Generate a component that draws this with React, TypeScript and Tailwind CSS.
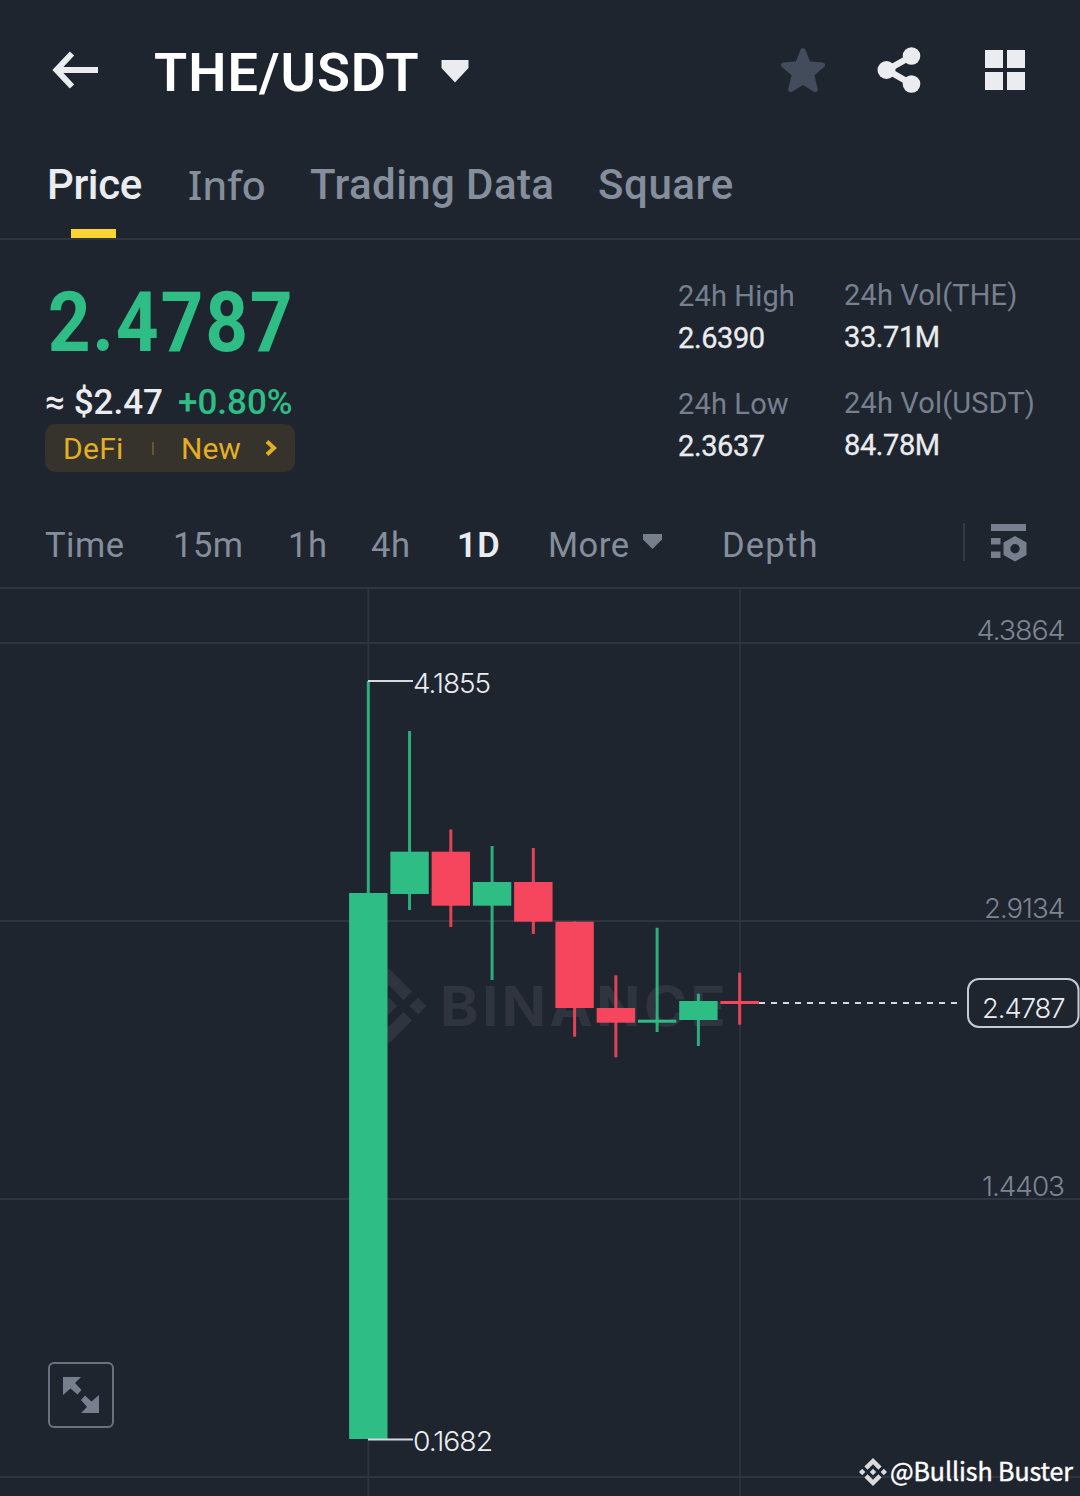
import clsx from 'clsx'

interface Candle {
  high: number
  low: number
  top: number
  bottom: number
  up: boolean
}

// Pixel values inside the chart's own coordinate space (0 = top border)
const CANDLES: Candle[] = [
  { high: 94, low: 852, top: 306, bottom: 852, up: true },
  { high: 144, low: 323, top: 264.7, bottom: 307, up: true },
  { high: 242.5, low: 340, top: 264.7, bottom: 318.7, up: false },
  { high: 259, low: 393, top: 295, bottom: 318.7, up: true },
  { high: 261, low: 347, top: 295, bottom: 334.7, up: false },
  { high: 334.4, low: 449.7, top: 334.7, bottom: 421, up: false },
  { high: 388.3, low: 470.3, top: 421, bottom: 435.7, up: false },
  { high: 340.7, low: 445, top: 432.7, bottom: 435.7, up: true },
  { high: 406.7, low: 459, top: 414, bottom: 433, up: true },
  { high: 385.7, low: 437.7, top: 414, bottom: 417, up: false },
]

const GRID_LINES = [
  { y: 56, label: '4.3864', x: 976.5, width: 88 },
  { y: 334, label: '2.9134', x: 984, width: 80 },
  { y: 612, label: '1.4403', x: 982, width: 82 },
  { y: 890, label: '', x: 0, width: 0 },
]

const TABS = [
  { label: 'Price', className: "w-[141px] font-['Roboto'] font-medium text-[#eaecef] tracking-[-0.400px]" },
  { label: 'Info', className: "w-[122px] font-['Noto_Sans'] text-[40px] font-medium" },
  { label: 'Trading Data', className: "w-[288px] font-['Roboto'] font-medium tracking-[0.400px]" },
  { label: 'Square', className: "w-[150px] font-['Roboto'] font-medium tracking-[0.600px]" },
]

const INTERVALS = [
  { label: 'Time', className: 'w-[128px]' },
  { label: '15m', className: 'w-[115px]' },
  { label: '1h', className: 'w-[83px]' },
  { label: '4h', className: 'w-[86px]' },
  { label: '1D', className: 'w-[90px] font-semibold text-[#eaecef]' },
]

const STATS = [
  [
    { label: '24h High', value: '2.6390' },
    { label: '24h Low', value: '2.3637' },
  ],
  [
    { label: '24h Vol(THE)', value: '33.71M' },
    { label: '24h Vol(USDT)', value: '84.78M' },
  ],
]

function BinanceMark({ className }: { className?: string }) {
  return (
    <svg viewBox="0 0 126.6 126.6" className={className} fill="currentColor">
      <BinancePaths />
    </svg>
  )
}

function BinancePaths() {
  return (
    <>
      <path d="M38.7 53.2 63.3 28.6 87.9 53.2 102.2 38.9 63.3 0 24.4 38.9z" />
      <path d="M0 63.3 14.3 49l14.3 14.3-14.3 14.3z" />
      <path d="M38.7 73.4 63.3 98l24.6-24.6 14.3 14.3-38.9 38.9-38.9-38.9z" />
      <path d="M98 63.3 112.3 49l14.3 14.3-14.3 14.3z" />
      <path d="M77.8 63.3 63.3 48.8 48.8 63.3 63.3 77.8z" />
    </>
  )
}

function Header() {
  return (
    <header className="flex h-[140px] items-center pl-[51px] pr-[55px]">
      <svg viewBox="0 0 48 40" className="h-10 w-12 shrink-0" fill="none" stroke="#eaecef" strokeWidth="6">
        <path d="M47 20H6M21 3.500 5.500 20 21 36.500" />
      </svg>
      <h1 className="ml-[55px] w-[287px] whitespace-nowrap pt-[5px] text-[54px] leading-[60px] font-semibold tracking-[1px] text-white">
        THE/USDT
      </h1>
      <svg viewBox="0 0 28 23" className="mt-[3px] h-[23px] w-7" fill="#eaecef">
        <path d="M.5 0H27.500V8L14 22.500 .5 8z" />
      </svg>
      <div className="ml-auto flex items-center">
        <svg viewBox="0 0 46 46" className="h-[46px] w-[46px]" fill="#434c5a" stroke="#434c5a" strokeWidth="5" strokeLinejoin="round">
          <path d="M23 3.500 28.300 16.800 42.500 18 31.700 27.300 35.300 42.500 23 35.200 10.700 42.500 14.300 27.300 3.500 18 17.700 16.800z" />
        </svg>
        <svg viewBox="0 0 44 46" className="ml-[51px] h-[46px] w-11" fill="#eaecef">
          <path d="M10 23 34 9.500M10 23 34 36.800" stroke="#eaecef" strokeWidth="6.500" />
          <circle cx="9.500" cy="23" r="9" />
          <circle cx="34.500" cy="9" r="8.800" />
          <circle cx="34.500" cy="37" r="8.800" />
        </svg>
        <div className="ml-[64px] grid grid-cols-2 gap-1">
          <span className="size-[18px] bg-[#eaecef]" />
          <span className="size-[18px] bg-[#eaecef]" />
          <span className="size-[18px] bg-[#eaecef]" />
          <span className="size-[18px] bg-[#eaecef]" />
        </div>
      </div>
    </header>
  )
}

function Tabs() {
  return (
    <nav className="flex h-[100px] border-b-2 border-[#2f3540] pl-[47px] text-[42px] leading-[90px] text-[#848e9c]">
      {TABS.map((tab, i) => (
        <div key={tab.label} className={clsx('shrink-0 whitespace-nowrap', tab.className)}>
          {tab.label}
          {i === 0 && <div className="-mt-px ml-6 h-[9px] w-[45px] bg-[#fcd535]" />}
        </div>
      ))}
    </nav>
  )
}

function Summary() {
  return (
    <section className="flex h-[260px] justify-between pt-[34px] pl-[45px]">
      <div>
        <div className="h-[94px] w-[270px] origin-left scale-x-[0.890] pl-[3px] text-[84px] leading-[97px] font-bold tracking-[2px] text-[#2ebd85]">
          2.4787
        </div>
        <div className="flex h-[56px] text-[35px] leading-[70px] font-medium">
          <span className="w-[133px] whitespace-nowrap text-[#eaecef]">≈ $2.47</span>
          <span className="text-[#2ebd85]">+0.80%</span>
        </div>
        <div className="flex h-12 w-[250px] items-center rounded-[10px] bg-[#35332c] pl-[18px] text-[30px] leading-[50px] text-[#e4ae26]">
          <span className="w-[89px] pt-[2px] tracking-[0.300px]">DeFi</span>
          <span className="h-[13px] w-[2px] bg-[#66562b]" />
          <span className="ml-[27px] w-[84px] pt-[2px]">New</span>
          <svg viewBox="0 0 12 16" className="h-4 w-3" fill="none" stroke="#e4ae26" strokeWidth="4">
            <path d="M2 1.500 9 8 2 14.500" />
          </svg>
        </div>
      </div>
      <div className="flex text-[29px] leading-[42px]">
        {STATS.map((column, i) => (
          <div key={i} className={clsx('flex flex-col gap-6', i === 0 ? 'w-[166px] pt-[1px]' : 'w-[236px]')}>
            {column.map((stat) => (
              <div key={stat.label} className="whitespace-nowrap">
                <div className="tracking-[0.150px] text-[#76808f]">{stat.label}</div>
                <div className="tracking-[-0.400px] text-[#eaecef] [-webkit-text-stroke:0.3px_#eaecef]">{stat.value}</div>
              </div>
            ))}
          </div>
        ))}
      </div>
    </section>
  )
}

function IntervalBar() {
  return (
    <div className="flex h-[87px] items-center pl-[45px] pr-[53px] text-[34.500px] leading-[84px] text-[#848e9c]">
      {INTERVALS.map((item) => (
        <span key={item.label} className={clsx('shrink-0 pt-[3px] tracking-[0.500px]', item.className)}>
          {item.label}
        </span>
      ))}
      <span className="w-[96px] shrink-0 pt-[3px] pl-[1px] tracking-[0.500px]">More</span>
      <svg viewBox="0 0 19 15" className="mb-[5px] h-[15px] w-[19px] shrink-0" fill="#777e8e">
        <path d="M0 0H19V5.500L9.500 15 0 5.500z" />
      </svg>
      <span className="ml-[60px] pt-[3px] tracking-[1.200px]">Depth</span>
      <span className="ml-auto mb-1 h-[38px] w-[2px] bg-[#343b46]" />
      <svg viewBox="0 0 36 38" className="mb-[1px] ml-[26px] h-[38px] w-9" fill="#777e8e">
        <path d="M0 0H35V7H0zM0 14H9.500V20.500H0zM0 27.500H9.500V34H0z" />
        <path fillRule="evenodd" d="M24 12 35.500 18.500V31L24 37.500 12.500 31V18.500zM24 20a4.700 4.700 0 1 0 0 9.400 4.700 4.700 0 1 0 0-9.400z" />
      </svg>
    </div>
  )
}

function Chart() {
  return (
    <div className="relative h-[909px]">
      <svg viewBox="0 0 1080 909" className="block h-[909px] w-full font-['Inter'] font-light">
        <path d="M0 .5H1080" stroke="#2f3540" strokeWidth="3" />
        {GRID_LINES.map((line) => (
          <g key={line.y}>
            <path d={`M0 ${line.y}H1080`} stroke="#2f3540" strokeWidth="2" />
            {line.label && (
              <text
                x={line.x}
                y={line.y - 3}
                fontSize="27"
                fill="#7d8593"
                letterSpacing="-1"
                textLength={line.width}
                lengthAdjust="spacingAndGlyphs"
              >
                {line.label}
              </text>
            )}
          </g>
        ))}
        <path d="M368.300 0V909M740 0V909" stroke="#2f3540" strokeWidth="1.800" />

        {/* watermark behind the candles */}
        <g fill="#2f343f">
          <g transform="translate(351.300 381.400) scale(.594)">
            <BinancePaths />
          </g>
          <text x="440" y="439" fontSize="55" className="font-bold" letterSpacing="3" textLength="289" lengthAdjust="spacingAndGlyphs">
            BINANCE
          </text>
        </g>

        {CANDLES.map((c, i) => {
          const x = 368.3 + i * 41.26
          return (
            <g key={i} fill={c.up ? '#2ebd85' : '#f6465d'}>
              <rect x={x - 1.5} y={c.high} width="3" height={c.low - c.high} opacity="0.9" />
              <rect x={x - 19.2} y={c.top} width="38.400" height={c.bottom - c.top} />
            </g>
          )
        })}

        <path d="M368 94H413M368 852.500H413" stroke="#d5d8dd" strokeWidth="2" />
        <g fontSize="27" fill="#eaecef" letterSpacing="-1">
          <text x="413" y="106" textLength="77" lengthAdjust="spacingAndGlyphs">4.1855</text>
          <text x="413" y="864" textLength="79" lengthAdjust="spacingAndGlyphs">0.1682</text>
        </g>

        <path d="M759 416H960" stroke="#d5d8dd" strokeWidth="2" strokeDasharray="6 6" />
        <rect x="968" y="392" width="110.500" height="48" rx="11" fill="#1f252f" stroke="#c5c9d2" strokeWidth="2" />
        <text x="982" y="431" fontSize="27" fill="#eaecef" letterSpacing="-1" textLength="82.500" lengthAdjust="spacingAndGlyphs">
          2.4787
        </text>
      </svg>

      <button className="absolute bottom-[68px] left-12 flex h-[66px] w-[66px] items-center justify-center rounded-md border-2 border-[#6a7280]">
        <svg viewBox="0 0 36 36" className="h-9 w-9" fill="#777e8e">
          <path d="M0 0H18L12 6 18.500 13 14.500 17.500 7.500 11.500 0 18z" />
          <path d="M36 36H18L24 30 18 23 22 18.500 28.500 24.500 36 18z" />
        </svg>
      </button>

      <div className="absolute right-[7px] bottom-1 flex items-center gap-[3px] text-white">
        <BinanceMark className="h-7 w-7 text-[#d9dadc]" />
        <span className="mb-1 font-['Noto_Sans_CJK_SC',sans-serif] text-[25px] leading-9 font-normal tracking-[-0.070px] [-webkit-text-stroke:0.4px_white]">
          @Bullish Buster
        </span>
      </div>
    </div>
  )
}

export default function App() {
  return (
    <main className="h-[1496px] w-[1080px] overflow-hidden bg-[#1f252f] font-['Roboto',sans-serif]">
      <Header />
      <Tabs />
      <Summary />
      <IntervalBar />
      <Chart />
    </main>
  )
}
